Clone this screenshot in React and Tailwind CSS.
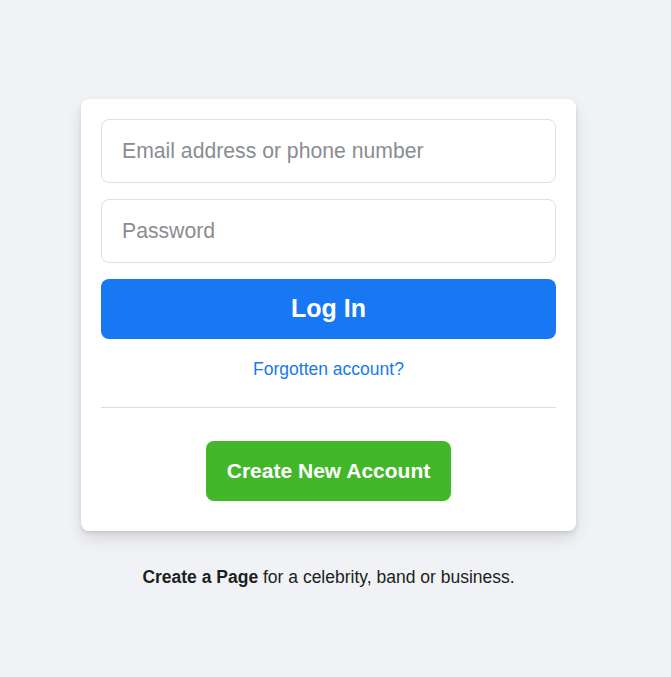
export default function App() {
  return (
    <div className="min-h-[677px] w-full bg-[#f0f2f5] font-['Liberation_Sans',Arial,sans-serif] flex flex-col items-center pt-[99px] pr-[14px]">
      <div className="w-[495px] bg-white rounded-[8px] shadow-[0_2px_4px_rgba(0,0,0,0.1),0_8px_16px_rgba(0,0,0,0.1)] px-[20px] pt-[20px] pb-[30px] flex flex-col">
        <input
          type="text"
          placeholder="Email address or phone number"
          className="h-[64px] w-full rounded-[8px] border border-[#dddfe2] px-[20px] text-[21.2px] text-[#1c1e21] placeholder:text-[#8a8d91] outline-none"
        />
        <input
          type="password"
          placeholder="Password"
          className="mt-[16px] h-[64px] w-full rounded-[8px] border border-[#dddfe2] px-[20px] text-[21.2px] text-[#1c1e21] placeholder:text-[#8a8d91] outline-none"
        />
        <button className="mt-[16px] h-[60px] w-full rounded-[8px] bg-[#1877f2] text-white text-[25px] font-bold">
          Log In
        </button>
        <a className="mt-[16px] text-center text-[17.5px] leading-[28px] text-[#1877f2]">
          Forgotten account?
        </a>
        <div className="mt-[24px] h-px bg-[#dadde1]" />
        <div className="mt-[33px] flex justify-center">
          <button className="h-[60px] w-[245px] rounded-[8px] bg-[#42b72a] text-white text-[21px] font-bold">
            Create New Account
          </button>
        </div>
      </div>
      <p className="mt-[34px] text-[17.5px] leading-[24px] text-[#1c1e21]">
        <span className="font-bold">Create a Page</span> for a celebrity, band or business.
      </p>
    </div>
  );
}
